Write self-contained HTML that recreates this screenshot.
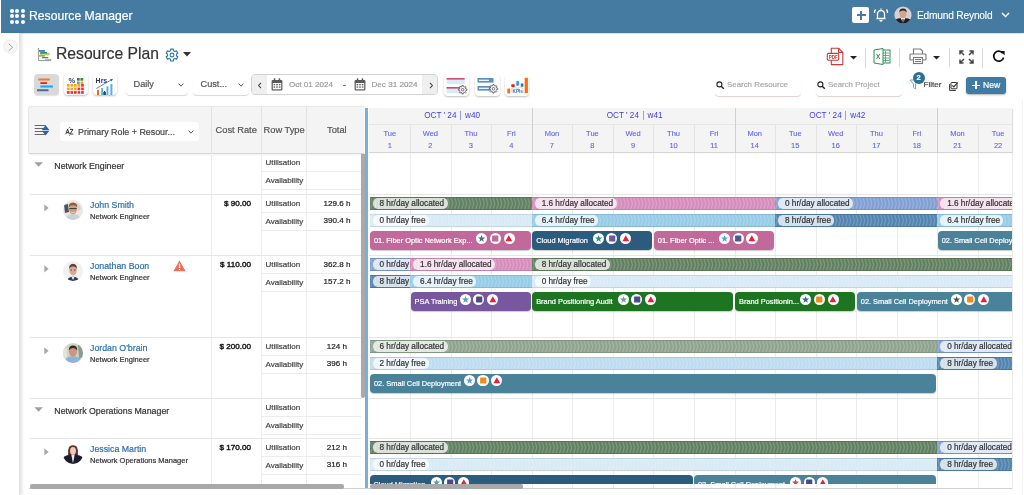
<!DOCTYPE html><html><head><meta charset="utf-8"><style>
*{box-sizing:border-box}
html,body{margin:0;padding:0}
body{width:1024px;height:495px;overflow:hidden;position:relative;background:#fff;will-change:transform;font-family:"Liberation Sans",sans-serif;color:#333}
.a{position:absolute}
.t{position:absolute;white-space:nowrap;line-height:1;-webkit-text-stroke:.2px currentColor}
.pill,.pt{-webkit-text-stroke:.2px currentColor}
.hdr{left:1px;top:0;width:1023px;height:33px;background:#457ba1;box-shadow:0 .5px 1px rgba(0,0,0,.12)}
.side{left:0;top:33px;width:20px;height:462px;background:#fff;border-right:1px solid #e2e2e2;box-shadow:2px 0 3px rgba(0,0,0,.12)}
.dd{background:#fff;border-radius:4px;box-shadow:0 1px 0.5px rgba(190,130,130,.32),0 1px 2px rgba(0,0,0,.04)}
.tb{background:#fff;border-radius:4px;box-shadow:0 1px 2px rgba(0,0,0,.25)}
.sep{width:1px;background:#d8d8d8}
.bar{position:absolute;height:13px;overflow:hidden;box-shadow:inset 0 1px 0 rgba(0,0,0,.09),inset 0 -1px 0 rgba(0,0,0,.09)}
.pill{position:absolute;left:3px;top:1px;height:11px;border-radius:5px;background:rgba(255,255,255,.74);font-size:8.2px;line-height:11px;padding:0 3.5px 0 7px;color:#333;white-space:nowrap}
.chev{background-image:repeating-linear-gradient(73deg,transparent 0,transparent .9px,rgba(255,255,255,.2) 1.4px,rgba(255,255,255,.2) 2.1px,transparent 2.6px,transparent 3.35px),repeating-linear-gradient(107deg,transparent 0,transparent .9px,rgba(255,255,255,.2) 1.4px,rgba(255,255,255,.2) 2.1px,transparent 2.6px,transparent 3.35px);background-size:100% 50%,100% 50%;background-position:0 0,0 100%;background-repeat:no-repeat}
.chevd{background-image:repeating-linear-gradient(-60deg,transparent 0 2.2px,rgba(0,0,0,.09) 2.2px 3.4px),repeating-linear-gradient(60deg,transparent 0 2.2px,rgba(0,0,0,.09) 2.2px 3.4px);background-size:100% 50%,100% 50%;background-position:0 0,0 100%;background-repeat:no-repeat}
.proj{position:absolute;height:19px;border-radius:4px;overflow:hidden;color:#fff;box-shadow:0 1px 1px rgba(0,0,0,.2)}
.proj .pt{position:absolute;left:4px;top:6px;font-size:7.4px;line-height:8px;white-space:nowrap}
.ic{position:absolute;top:2px;width:11.2px;height:11.2px;border-radius:50%;background:#fff}
.vl{position:absolute;width:1px;background:#ececec}
.hl{position:absolute;height:1px;background:#e6e6e6}
.wk{color:#3c3cf0;font-size:8.2px;-webkit-text-stroke:0}
.dy{color:#6262f0;font-size:7.5px;text-align:center;-webkit-text-stroke:.1px #6262f0}
</style></head><body><svg class="a" width="0" height="0" style="left:0;top:0"><defs><pattern id="chev" x="0" y="0" width="3.5" height="13" patternUnits="userSpaceOnUse"><path d="M0.6 1 L2.4 6.5 L0.6 12" fill="none" stroke="#fff" stroke-opacity=".22" stroke-width="1.2"/></pattern></defs></svg><div class="a hdr"></div><div class="a" style="left:9.8px;top:8.6px;width:4.2px;height:4.2px;border-radius:50%;background:#fff"></div><div class="a" style="left:15.3px;top:8.6px;width:4.2px;height:4.2px;border-radius:50%;background:#fff"></div><div class="a" style="left:20.8px;top:8.6px;width:4.2px;height:4.2px;border-radius:50%;background:#fff"></div><div class="a" style="left:9.8px;top:14.1px;width:4.2px;height:4.2px;border-radius:50%;background:#fff"></div><div class="a" style="left:15.3px;top:14.1px;width:4.2px;height:4.2px;border-radius:50%;background:#fff"></div><div class="a" style="left:20.8px;top:14.1px;width:4.2px;height:4.2px;border-radius:50%;background:#fff"></div><div class="a" style="left:9.8px;top:19.6px;width:4.2px;height:4.2px;border-radius:50%;background:#fff"></div><div class="a" style="left:15.3px;top:19.6px;width:4.2px;height:4.2px;border-radius:50%;background:#fff"></div><div class="a" style="left:20.8px;top:19.6px;width:4.2px;height:4.2px;border-radius:50%;background:#fff"></div><div class="t" style="left:29px;top:10px;font-size:12.2px;color:#fff">Resource Manager</div><div class="a" style="left:852px;top:7px;width:17px;height:16px;background:#fff;border-radius:2px"></div><div class="a" style="left:856.5px;top:14.4px;width:9.5px;height:1.8px;background:#457ba1"></div><div class="a" style="left:860.4px;top:10.6px;width:1.8px;height:9.4px;background:#457ba1"></div><svg class="a" style="left:873px;top:6px" width="16" height="17" viewBox="0 0 16 17"><g fill="none" stroke="#fff" stroke-width="1.3"><path d="M4.5 12.5 V8 a3.5 3.5 0 0 1 7 0 V12.5 Z M3.5 12.5 H12.5"/><path d="M7 14 a1 1 0 0 0 2 0"/><path d="M2.5 3.5 Q1.2 5 1.5 7 M13.5 3.5 Q14.8 5 14.5 7"/><path d="M8 2.5 V3.8"/></g></svg><svg class="a" style="left:894.3px;top:6px" width="18" height="18" viewBox="0 0 18 18"><defs><clipPath id="cav"><circle cx="9" cy="9" r="8.6"/></clipPath></defs><g clip-path="url(#cav)"><rect width="18" height="18" fill="#d6d2d0"/><path d="M0 18 L1 14 Q3 12 9 12 Q15 12 17 14 L18 18Z" fill="#1e1e22"/><path d="M6.8 12 L9 17.5 L11.2 12Z" fill="#f2f2f2"/><path d="M8.5 13 H9.5 L9.8 17 H8.2Z" fill="#222"/><ellipse cx="9" cy="7.8" rx="3.6" ry="4.4" fill="#d4a58e"/><path d="M5.3 6.6 Q5.2 2.6 9 2.5 Q12.8 2.6 12.7 6.6 Q11.6 4.4 9 4.5 Q6.4 4.4 5.3 6.6Z" fill="#2e2622"/></g></svg><div class="t" style="left:917px;top:11.2px;font-size:10.2px;letter-spacing:-.2px;color:#fff;-webkit-text-stroke:.1px #fff">Edmund Reynold</div><svg class="a" style="left:1001px;top:12px" width="9" height="6" viewBox="0 0 9 6"><path d="M1 1 L4.5 4.5 L8 1" fill="none" stroke="#fff" stroke-width="1.5"/></svg><div class="a side"></div><div class="a" style="left:3.5px;top:40px;width:13.3px;height:13.3px;border-radius:50%;background:#f6f6f6;box-shadow:0 0 1.5px rgba(0,0,0,.22)"></div><svg class="a" style="left:7px;top:42.5px" width="8" height="9" viewBox="0 0 8 9"><path d="M1.8 .8 L5.6 4.3 L1.8 7.8" fill="none" stroke="#8a96aa" stroke-width=".9"/></svg><svg class="a" style="left:37px;top:47px" width="16" height="15" viewBox="0 0 16 15"><path d="M1.6 1 V13.6 H14" fill="none" stroke="#8a8a8a" stroke-width=".9"/><rect x="2" y="3.2" width="5.9" height="1.5" fill="#2a6090"/><rect x="3.2" y="5" width="6.8" height="1.4" fill="#3a80b8"/><rect x="3" y="6.5" width="9.5" height=".6" fill="#555"/><rect x="3" y="7.1" width="9.7" height="1.2" fill="#b8e040"/><rect x="2" y="8.3" width="5.9" height="1.2" fill="#8a8a30"/><rect x="5" y="10" width="6.2" height="1.3" fill="#3a80b8"/><rect x="8" y="12.3" width="3" height="1" fill="#6ab0e0"/><rect x="11" y="12.2" width="1.2" height="1.1" fill="#f08030"/><rect x="12.5" y="12" width="2" height="1" fill="#7ad07a"/></svg><div class="t" style="left:56px;top:46.3px;font-size:15.7px;color:#333">Resource Plan</div><svg class="a" style="left:164.6px;top:47.6px" width="14" height="14" viewBox="0 0 14 14"><path d="M5.53 2.64 L5.67 1.05 L8.33 1.05 L8.47 2.64 L10.04 3.55 L11.49 2.87 L12.82 5.18 L11.51 6.09 L11.51 7.91 L12.82 8.82 L11.49 11.13 L10.04 10.45 L8.47 11.36 L8.33 12.95 L5.67 12.95 L5.53 11.36 L3.96 10.45 L2.51 11.13 L1.18 8.82 L2.49 7.91 L2.49 6.09 L1.18 5.18 L2.51 2.87 L3.96 3.55Z" fill="none" stroke="#2f78aa" stroke-width="1.15" stroke-linejoin="round"/><circle cx="7" cy="7" r="1.9" fill="none" stroke="#2f78aa" stroke-width="1.1"/></svg><svg class="a" style="left:182.5px;top:52px" width="8" height="5" viewBox="0 0 8 5"><path d="M0 0 H8 L4 4.5Z" fill="#333"/></svg><div class="a" style="left:34px;top:74px;width:25px;height:21px;border-radius:4px;background:#d9d9d9;box-shadow:0 1px 1px rgba(0,0,0,.12)"></div><svg class="a" style="left:37px;top:76px" width="19" height="17" viewBox="0 0 19 17"><rect x="1.3" y="2.5" width="11.5" height="1.9" rx=".3" fill="#f47b20"/><rect x="3.4" y="6.3" width="6.7" height="1.8" rx=".3" fill="#f01818"/><rect x="3.4" y="9.6" width="12.6" height="2" rx=".3" fill="#19a6f0"/><rect x="0" y="13.3" width="11.5" height="1.9" rx=".3" fill="#3f6f9a"/></svg><div class="a tb" style="left:64px;top:74px;width:24px;height:21px"></div><svg class="a" style="left:66px;top:76px" width="20" height="19" viewBox="0 0 20 19"><text x="2.6" y="7.4" font-family="Liberation Sans" font-size="7.5" font-weight="bold" fill="#2c3a6a">%</text><rect x="11" y="2" width="2.7" height="2.7" fill="#2e8b3a"/><rect x="14.5" y="2" width="2.7" height="2.7" fill="#2e8b3a"/><rect x="11" y="5.5" width="2.7" height="2.7" fill="#4aa0e0"/><rect x="14.5" y="5.5" width="2.7" height="2.7" fill="#f5a623"/><rect x="0.90" y="8.00" width="2.7" height="2.7" fill="#f5a623"/><rect x="4.45" y="8.00" width="2.7" height="2.7" fill="#f5a623"/><rect x="8.00" y="8.00" width="2.7" height="2.7" fill="#f5a623"/><rect x="11.55" y="8.00" width="2.7" height="2.7" fill="#f5a623"/><rect x="15.10" y="8.00" width="2.7" height="2.7" fill="#e8343a"/><rect x="0.90" y="11.55" width="2.7" height="2.7" fill="#f5a623"/><rect x="4.45" y="11.55" width="2.7" height="2.7" fill="#f5a623"/><rect x="8.00" y="11.55" width="2.7" height="2.7" fill="#f5a623"/><rect x="11.55" y="11.55" width="2.7" height="2.7" fill="#e8343a"/><rect x="15.10" y="11.55" width="2.7" height="2.7" fill="#e8343a"/><rect x="0.90" y="15.10" width="2.7" height="2.7" fill="#e8343a"/><rect x="4.45" y="15.10" width="2.7" height="2.7" fill="#e8343a"/><rect x="8.00" y="15.10" width="2.7" height="2.7" fill="#e8343a"/><rect x="11.55" y="15.10" width="2.7" height="2.7" fill="#e8343a"/><rect x="15.10" y="15.10" width="2.7" height="2.7" fill="#e8343a"/></svg><div class="a tb" style="left:93px;top:74px;width:24px;height:21px"></div><svg class="a" style="left:95px;top:75px" width="20" height="21" viewBox="0 0 20 21"><text x=".6" y="7.6" font-family="Liberation Sans" font-size="7" font-weight="bold" fill="#2c3a6a">Hrs</text><rect x="2" y="14.8" width="2" height="5.2" fill="#f06a20"/><rect x="6.2" y="13" width="1.9" height="7" fill="#5ab0dc"/><rect x="11.5" y="11.3" width="1.9" height="8.7" fill="#5ab0dc"/><rect x="15.4" y="9" width="2" height="11" fill="#5ab0dc"/><path d="M8.3 17 h2.6 v3 h-2.6z M9 16 h1.2 v1 h-1.2z" fill="#2c4a6a"/><path d="M1.3 13.5 L17.2 4.4" stroke="#2a6a9a" stroke-width=".8"/><path d="M15 3.9 L17.9 4 L16.6 6.5Z" fill="#2a6a9a"/></svg><div class="a dd" style="left:125.5px;top:74px;width:62px;height:20.5px"></div><div class="t" style="left:133.5px;top:79.5px;font-size:9.2px;color:#555">Daily</div><svg class="a" style="left:177.5px;top:82.5px" width="6" height="4" viewBox="0 0 6 4"><path d="M.6 .6 L3 3.2 L5.4 .6" fill="none" stroke="#555" stroke-width="1"/></svg><div class="a dd" style="left:193px;top:74px;width:55.5px;height:20.5px"></div><div class="t" style="left:200.5px;top:79.5px;font-size:9.2px;color:#555">Cust...</div><svg class="a" style="left:238px;top:82.5px" width="6" height="4" viewBox="0 0 6 4"><path d="M.6 .6 L3 3.2 L5.4 .6" fill="none" stroke="#555" stroke-width="1"/></svg><div class="a" style="left:251px;top:74.3px;width:187px;height:21px;border:1px solid #d2d2d2;border-radius:4px;background:#fff;overflow:hidden"><div class="a" style="left:0;top:0;width:15px;height:19px;background:#efefef"></div><div class="a" style="right:0;top:0;width:15px;height:19px;background:#efefef"></div></div><svg class="a" style="left:256.5px;top:81.5px" width="6" height="7" viewBox="0 0 6 7"><path d="M4 .8 L1.6 3.5 L4 6.2" fill="none" stroke="#444" stroke-width="1.1"/></svg><svg class="a" style="left:427.5px;top:81.5px" width="6" height="7" viewBox="0 0 6 7"><path d="M2 .8 L4.4 3.5 L2 6.2" fill="none" stroke="#444" stroke-width="1.1"/></svg><svg class="a" style="left:271px;top:77.5px" width="12" height="13" viewBox="0 0 12 13"><rect x="0.6" y="2" width="10.8" height="10.4" rx="1" fill="#5a5a5a"/><rect x="1.8" y="5" width="8.4" height="6.3" fill="#fff"/><rect x="2.8" y="0.3" width="1.5" height="3" fill="#5a5a5a"/><rect x="7.7" y="0.3" width="1.5" height="3" fill="#5a5a5a"/><g fill="#5a5a5a"><rect x="2.6" y="6" width="1.6" height="1.3"/><rect x="5.2" y="6" width="1.6" height="1.3"/><rect x="7.8" y="6" width="1.6" height="1.3"/><rect x="2.6" y="8.4" width="1.6" height="1.3"/><rect x="5.2" y="8.4" width="1.6" height="1.3"/><rect x="7.8" y="8.4" width="1.6" height="1.3"/></g></svg><svg class="a" style="left:353.5px;top:77.5px" width="12" height="13" viewBox="0 0 12 13"><rect x="0.6" y="2" width="10.8" height="10.4" rx="1" fill="#5a5a5a"/><rect x="1.8" y="5" width="8.4" height="6.3" fill="#fff"/><rect x="2.8" y="0.3" width="1.5" height="3" fill="#5a5a5a"/><rect x="7.7" y="0.3" width="1.5" height="3" fill="#5a5a5a"/><g fill="#5a5a5a"><rect x="2.6" y="6" width="1.6" height="1.3"/><rect x="5.2" y="6" width="1.6" height="1.3"/><rect x="7.8" y="6" width="1.6" height="1.3"/><rect x="2.6" y="8.4" width="1.6" height="1.3"/><rect x="5.2" y="8.4" width="1.6" height="1.3"/><rect x="7.8" y="8.4" width="1.6" height="1.3"/></g></svg><div class="t" style="left:289px;top:81px;font-size:8.1px;color:#9a9a9a">Oct 01 2024</div><div class="a" style="left:342.5px;top:85px;width:3.5px;height:1px;background:#777"></div><div class="t" style="left:371.5px;top:81px;font-size:8.1px;color:#9a9a9a">Dec 31 2024</div><div class="a tb" style="left:444px;top:75px;width:25px;height:21px"></div><svg class="a" style="left:444px;top:75px" width="25" height="21" viewBox="0 0 25 21"><rect x="2.6" y="3" width="18" height="6" fill="#d6eaf8"/><rect x="2.6" y="3" width="18" height="1.6" fill="#d04a6e"/><rect x="2.6" y="12" width="18" height="6" fill="#d6eaf8"/><rect x="2.6" y="12" width="18" height="1.6" fill="#d04a6e"/><path d="M21.83 14.01 L22.96 14.11 L22.96 15.29 L21.83 15.39 L21.40 16.43 L22.13 17.30 L21.30 18.13 L20.43 17.40 L19.39 17.83 L19.29 18.96 L18.11 18.96 L18.01 17.83 L16.97 17.40 L16.10 18.13 L15.27 17.30 L16.00 16.43 L15.57 15.39 L14.44 15.29 L14.44 14.11 L15.57 14.01 L16.00 12.97 L15.27 12.10 L16.10 11.27 L16.97 12.00 L18.01 11.57 L18.11 10.44 L19.29 10.44 L19.39 11.57 L20.43 12.00 L21.30 11.27 L22.13 12.10 L21.40 12.97Z" fill="#fff" stroke="#5a5a5a" stroke-width=".9" stroke-linejoin="round"/><circle cx="18.7" cy="14.7" r="1.3" fill="none" stroke="#5a5a5a" stroke-width=".8"/></svg><div class="a tb" style="left:474.5px;top:75px;width:25px;height:21px"></div><svg class="a" style="left:474.5px;top:75px" width="25" height="21" viewBox="0 0 25 21"><rect x="2.5" y="3" width="16" height="4.6" fill="#5b8fc0"/><rect x="4" y="4.7" width="10" height="1.2" fill="#fff"/><rect x="2.5" y="11" width="16" height="4.6" fill="#5b8fc0"/><rect x="4" y="12.7" width="10" height="1.2" fill="#fff"/><path d="M21.63 13.11 L22.76 13.21 L22.76 14.39 L21.63 14.49 L21.20 15.53 L21.93 16.40 L21.10 17.23 L20.23 16.50 L19.19 16.93 L19.09 18.06 L17.91 18.06 L17.81 16.93 L16.77 16.50 L15.90 17.23 L15.07 16.40 L15.80 15.53 L15.37 14.49 L14.24 14.39 L14.24 13.21 L15.37 13.11 L15.80 12.07 L15.07 11.20 L15.90 10.37 L16.77 11.10 L17.81 10.67 L17.91 9.54 L19.09 9.54 L19.19 10.67 L20.23 11.10 L21.10 10.37 L21.93 11.20 L21.20 12.07Z" fill="#fff" stroke="#5a5a5a" stroke-width=".9" stroke-linejoin="round"/><circle cx="18.5" cy="13.8" r="1.3" fill="none" stroke="#5a5a5a" stroke-width=".8"/></svg><div class="a tb" style="left:504.5px;top:75px;width:24.5px;height:21px"></div><svg class="a" style="left:504.5px;top:75px" width="25" height="21" viewBox="0 0 25 21"><rect x="2.3" y="13.6" width="2.7" height="4.8" fill="#ff6a10"/><rect x="6.3" y="9.2" width="3.4" height="2.8" rx=".5" fill="#f01818"/><rect x="11.3" y="6" width="2.6" height="4.8" rx=".5" fill="#1aa0f0"/><rect x="15.8" y="8.4" width="2.6" height="3.4" rx=".3" fill="#3f6f9a"/><rect x="19.7" y="2.8" width="3.2" height="15.3" fill="#ff6a10"/><path d="M6 17.8 L6.5 13.5 L9 12.5 L12.5 13.3 L15.5 12.4 L18 13.5 L18.2 17.8" fill="none" stroke="#8aaac8" stroke-width=".7" stroke-dasharray="1 .6"/><text x="7.6" y="17.6" font-family="Liberation Sans" font-size="4.6" font-weight="bold" fill="#3f6f9a">KPIs</text></svg><svg class="a" style="left:826px;top:47px" width="19" height="19" viewBox="0 0 19 19"><path d="M5.3 1.2 H12.6 L16.8 5.4 V17.6 H5.3 Z M12.6 1.2 V5.4 H16.8" fill="none" stroke="#cc3b36" stroke-width="1.1" stroke-linejoin="round"/><rect x="1.3" y="6.4" width="11.4" height="6.9" rx="1.2" fill="#fff" stroke="#cc3b36" stroke-width="1.1"/><text x="2.7" y="11.6" font-family="Liberation Sans" font-size="4.6" font-weight="bold" fill="#cc3b36">PDF</text></svg><svg class="a" style="left:850px;top:56px" width="7" height="4" viewBox="0 0 7 4"><path d="M0 0 H7 L3.5 3.5Z" fill="#222"/></svg><div class="a sep" style="left:865px;top:48px;height:19.5px"></div><svg class="a" style="left:873px;top:47.5px" width="18" height="17" viewBox="0 0 18 17"><rect x="7" y="2" width="10" height="13" fill="#fff" stroke="#2e8b57" stroke-width="1"/><g stroke="#2e8b57" stroke-width=".7"><path d="M9 5 H16 M9 7.5 H16 M9 10 H16 M9 12.5 H16 M12.5 3 V14.5"/></g><path d="M1 2 L10 0.5 V16.5 L1 15 Z" fill="#fff" stroke="#2e8b57" stroke-width="1"/><text x="3" y="11" font-family="Liberation Sans" font-size="6.5" font-weight="bold" fill="#2e8b57">X</text></svg><div class="a sep" style="left:898.5px;top:48px;height:19px"></div><svg class="a" style="left:909px;top:47.5px" width="18" height="17" viewBox="0 0 18 17"><g fill="none" stroke="#7a7a7a" stroke-width="1.15"><path d="M4.5 6 V1 H11.5 L13.5 3 V6"/><path d="M4 12 H2 Q1 12 1 11 V7 Q1 6 2 6 H16 Q17 6 17 7 V11 Q17 12 16 12 H14"/><rect x="4.5" y="9.5" width="9" height="6"/><path d="M6 11.5 H12 M6 13.5 H12"/></g></svg><svg class="a" style="left:933px;top:56px" width="7" height="4" viewBox="0 0 7 4"><path d="M0 0 H7 L3.5 3.5Z" fill="#222"/></svg><div class="a sep" style="left:949px;top:48px;height:19px"></div><svg class="a" style="left:959px;top:50px" width="15" height="14" viewBox="0 0 15 14"><g fill="none" stroke="#444" stroke-width="1.5"><path d="M1 4.5 V1 H4.5 M1 1 L5 5"/><path d="M14 4.5 V1 H10.5 M14 1 L10 5"/><path d="M1 9.5 V13 H4.5 M1 13 L5 9"/><path d="M14 9.5 V13 H10.5 M14 13 L10 9"/></g></svg><div class="a sep" style="left:982px;top:48px;height:19.5px"></div><svg class="a" style="left:991.5px;top:50px" width="14" height="13" viewBox="0 0 14 13"><path d="M10.8 3.2 A5 5 0 1 0 11.6 7.5" fill="none" stroke="#111" stroke-width="1.7"/><path d="M8.2 1 H12.6 V5.3Z" fill="#111"/></svg><div class="a dd" style="left:714.5px;top:75px;width:86.5px;height:21px"></div><svg class="a" style="left:715.5px;top:81px" width="9" height="9" viewBox="0 0 9 9"><circle cx="3.4" cy="3.4" r="2.5" fill="none" stroke="#222" stroke-width="1.1"/><path d="M5.2 5.2 L7.8 7.8" stroke="#222" stroke-width="1.4"/></svg><div class="t" style="left:727.0px;top:80.8px;font-size:7.9px;color:#a9a9a9">Search Resource</div><div class="a dd" style="left:815.5px;top:75px;width:86px;height:21px"></div><svg class="a" style="left:816.5px;top:81px" width="9" height="9" viewBox="0 0 9 9"><circle cx="3.4" cy="3.4" r="2.5" fill="none" stroke="#222" stroke-width="1.1"/><path d="M5.2 5.2 L7.8 7.8" stroke="#222" stroke-width="1.4"/></svg><div class="t" style="left:828.0px;top:80.8px;font-size:7.9px;color:#a9a9a9">Search Project</div><svg class="a" style="left:909px;top:78.5px" width="11" height="11" viewBox="0 0 11 11"><path d="M1 1 H10 L6.5 5 V10 L4.5 8.5 V5 Z" fill="none" stroke="#5bbcbc" stroke-width="1"/></svg><div class="a" style="left:912.8px;top:71.5px;width:12px;height:12px;border-radius:50%;background:#2f6f94"></div><div class="t" style="left:916.6px;top:74px;font-size:7.5px;color:#fff;font-weight:bold">2</div><div class="t" style="left:923.5px;top:81px;font-size:8.1px;color:#444">Filter</div><svg class="a" style="left:947.5px;top:80.5px" width="11" height="11" viewBox="0 0 11 11"><path d="M1.6 3.2 V9.4 H7.8" fill="none" stroke="#333" stroke-width="1"/><rect x="3" y="1.5" width="6" height="6.3" rx=".8" fill="#fff" stroke="#333" stroke-width="1"/><path d="M4.3 4.4 L5.8 5.9 L9.6 1.6" fill="none" stroke="#333" stroke-width="1.2"/></svg><div class="a" style="left:966px;top:77px;width:39.5px;height:17px;border-radius:3px;background:#3f7ba3;box-shadow:0 1px 2px rgba(0,0,0,.3)"></div><div class="a" style="left:971.6px;top:84.6px;width:8.4px;height:1.5px;background:#fff"></div><div class="a" style="left:975.1px;top:81.1px;width:1.5px;height:8.4px;background:#fff"></div><div class="t" style="left:983px;top:81px;font-size:8.6px;color:#fff">New</div><div class="a" style="left:29px;top:107px;width:984px;height:382px"></div><div class="a" style="left:29px;top:107px;width:335px;height:46px;background:#f4f4f4;border-radius:3px 0 0 0;box-shadow:0 1px 0 #d6d6d6,0 2px 2px rgba(0,0,0,.06),-.5px -.5px 1px rgba(0,0,0,.1)"></div><div class="a" style="left:211px;top:107px;width:1px;height:46px;background:#e2e2e2"></div><div class="a" style="left:261px;top:107px;width:1px;height:46px;background:#e2e2e2"></div><div class="a" style="left:306px;top:107px;width:1px;height:46px;background:#e2e2e2"></div><svg class="a" style="left:34px;top:124px" width="16" height="13" viewBox="0 0 16 13"><g fill="#666"><rect x=".7" y="1" width="11" height="1"/><rect x=".7" y="4" width="9" height="1"/><rect x=".7" y="7" width="9" height="1"/><rect x=".7" y="10" width="11" height="1"/></g><path d="M7.8 5.9 L11.6 1.2 L15.4 5.9Z" fill="#2a65a8"/><path d="M7.8 6.8 L11.6 11.5 L15.4 6.8Z" fill="#2a65a8"/></svg><div class="a" style="left:59.5px;top:122px;width:139px;height:19px;border-radius:3px;background:#fff"></div><svg class="a" style="left:65px;top:125.5px" width="10" height="10" viewBox="0 0 10 10"><path d="M.8 8.2 L2.6 3.2 L4.4 8.2 M1.5 6.6 H3.7" fill="none" stroke="#333" stroke-width="1"/><path d="M4.9 3.4 H8 L5 8 H8.3" fill="none" stroke="#333" stroke-width="1"/><path d="M3.6 2.4 L4.6 1.2 L5.6 2.4" fill="none" stroke="#555" stroke-width=".7"/><circle cx="4.6" cy="9.3" r=".5" fill="#555"/></svg><div class="t" style="left:78px;top:127.5px;font-size:8.9px;color:#444">Primary Role + Resour...</div><svg class="a" style="left:188px;top:129.5px" width="6" height="4" viewBox="0 0 6 4"><path d="M.6 .6 L3 3.2 L5.4 .6" fill="none" stroke="#555" stroke-width="1"/></svg><div class="t" style="left:215.5px;top:126px;font-size:9.3px;color:#555">Cost Rate</div><div class="t" style="left:263.5px;top:126px;font-size:9.3px;color:#555">Row Type</div><div class="t" style="left:327px;top:126px;font-size:9.3px;color:#555">Total</div><div class="a" style="left:361px;top:153.5px;width:3.6px;height:244px;background:#a9a9a9;border-radius:0 0 2px 2px"></div><div class="a" style="left:364.8px;top:107.5px;width:3px;height:381.5px;background:#79b0da"></div><div class="a" style="left:369.3px;top:108px;width:642.7px;height:44px;background:#f4f4f4;box-shadow:0 1px 0 #d6d6d6,1px 1px 1px rgba(0,0,0,.12)"></div><div class="a" style="left:369.3px;top:124.3px;width:642.7px;height:1px;background:#e6e6e6"></div><div class="t dy" style="left:369.5px;top:129.5px;width:40.5px">Tue</div><div class="t dy" style="left:369.5px;top:141.5px;width:40.5px">1</div><div class="a" style="left:410.1px;top:124.3px;width:1px;height:28px;background:#e4e4e4"></div><div class="t dy" style="left:410.1px;top:129.5px;width:40.5px">Wed</div><div class="t dy" style="left:410.1px;top:141.5px;width:40.5px">2</div><div class="a" style="left:450.6px;top:124.3px;width:1px;height:28px;background:#e4e4e4"></div><div class="t dy" style="left:450.6px;top:129.5px;width:40.5px">Thu</div><div class="t dy" style="left:450.6px;top:141.5px;width:40.5px">3</div><div class="a" style="left:491.1px;top:124.3px;width:1px;height:28px;background:#e4e4e4"></div><div class="t dy" style="left:491.1px;top:129.5px;width:40.5px">Fri</div><div class="t dy" style="left:491.1px;top:141.5px;width:40.5px">4</div><div class="a" style="left:531.7px;top:108px;width:1px;height:44.5px;background:#cfcfcf"></div><div class="t dy" style="left:531.7px;top:129.5px;width:40.5px">Mon</div><div class="t dy" style="left:531.7px;top:141.5px;width:40.5px">7</div><div class="a" style="left:572.2px;top:124.3px;width:1px;height:28px;background:#e4e4e4"></div><div class="t dy" style="left:572.2px;top:129.5px;width:40.5px">Tue</div><div class="t dy" style="left:572.2px;top:141.5px;width:40.5px">8</div><div class="a" style="left:612.8px;top:124.3px;width:1px;height:28px;background:#e4e4e4"></div><div class="t dy" style="left:612.8px;top:129.5px;width:40.5px">Wed</div><div class="t dy" style="left:612.8px;top:141.5px;width:40.5px">9</div><div class="a" style="left:653.3px;top:124.3px;width:1px;height:28px;background:#e4e4e4"></div><div class="t dy" style="left:653.3px;top:129.5px;width:40.5px">Thu</div><div class="t dy" style="left:653.3px;top:141.5px;width:40.5px">10</div><div class="a" style="left:693.9px;top:124.3px;width:1px;height:28px;background:#e4e4e4"></div><div class="t dy" style="left:693.9px;top:129.5px;width:40.5px">Fri</div><div class="t dy" style="left:693.9px;top:141.5px;width:40.5px">11</div><div class="a" style="left:734.5px;top:108px;width:1px;height:44.5px;background:#cfcfcf"></div><div class="t dy" style="left:734.5px;top:129.5px;width:40.5px">Mon</div><div class="t dy" style="left:734.5px;top:141.5px;width:40.5px">14</div><div class="a" style="left:775.0px;top:124.3px;width:1px;height:28px;background:#e4e4e4"></div><div class="t dy" style="left:775.0px;top:129.5px;width:40.5px">Tue</div><div class="t dy" style="left:775.0px;top:141.5px;width:40.5px">15</div><div class="a" style="left:815.5px;top:124.3px;width:1px;height:28px;background:#e4e4e4"></div><div class="t dy" style="left:815.5px;top:129.5px;width:40.5px">Wed</div><div class="t dy" style="left:815.5px;top:141.5px;width:40.5px">16</div><div class="a" style="left:856.1px;top:124.3px;width:1px;height:28px;background:#e4e4e4"></div><div class="t dy" style="left:856.1px;top:129.5px;width:40.5px">Thu</div><div class="t dy" style="left:856.1px;top:141.5px;width:40.5px">17</div><div class="a" style="left:896.6px;top:124.3px;width:1px;height:28px;background:#e4e4e4"></div><div class="t dy" style="left:896.6px;top:129.5px;width:40.5px">Fri</div><div class="t dy" style="left:896.6px;top:141.5px;width:40.5px">18</div><div class="a" style="left:937.2px;top:108px;width:1px;height:44.5px;background:#cfcfcf"></div><div class="t dy" style="left:937.2px;top:129.5px;width:40.5px">Mon</div><div class="t dy" style="left:937.2px;top:141.5px;width:40.5px">21</div><div class="a" style="left:977.8px;top:124.3px;width:1px;height:28px;background:#e4e4e4"></div><div class="t dy" style="left:977.8px;top:129.5px;width:40.5px">Tue</div><div class="t dy" style="left:977.8px;top:141.5px;width:40.5px">22</div><div class="t wk" style="left:422.1px;top:110.5px;width:60px;text-align:center">OCT &#39; 24 <span style="display:inline-block;width:1px;height:9px;background:#a0a0d8;vertical-align:-2px;margin:0 1.5px"></span> w40</div><div class="t wk" style="left:604.6px;top:110.5px;width:60px;text-align:center">OCT &#39; 24 <span style="display:inline-block;width:1px;height:9px;background:#a0a0d8;vertical-align:-2px;margin:0 1.5px"></span> w41</div><div class="t wk" style="left:807.3px;top:110.5px;width:60px;text-align:center">OCT &#39; 24 <span style="display:inline-block;width:1px;height:9px;background:#a0a0d8;vertical-align:-2px;margin:0 1.5px"></span> w42</div><div class="vl" style="left:410.1px;top:153px;height:335px"></div><div class="vl" style="left:450.6px;top:153px;height:335px"></div><div class="vl" style="left:491.1px;top:153px;height:335px"></div><div class="vl" style="left:531.7px;top:153px;height:335px"></div><div class="vl" style="left:572.2px;top:153px;height:335px"></div><div class="vl" style="left:612.8px;top:153px;height:335px"></div><div class="vl" style="left:653.3px;top:153px;height:335px"></div><div class="vl" style="left:693.9px;top:153px;height:335px"></div><div class="vl" style="left:734.5px;top:153px;height:335px"></div><div class="vl" style="left:775.0px;top:153px;height:335px"></div><div class="vl" style="left:815.5px;top:153px;height:335px"></div><div class="vl" style="left:856.1px;top:153px;height:335px"></div><div class="vl" style="left:896.6px;top:153px;height:335px"></div><div class="vl" style="left:937.2px;top:153px;height:335px"></div><div class="vl" style="left:977.8px;top:153px;height:335px"></div><div class="hl" style="left:30px;top:194px;width:331px"></div><div class="hl" style="left:369px;top:194px;width:643px"></div><div class="hl" style="left:261px;top:171px;width:100px;background:#ececec"></div><div class="hl" style="left:261px;top:189px;width:100px;background:#ececec"></div><div class="t" style="left:265.5px;top:158.5px;font-size:8px;color:#444">Utilisation</div><div class="t" style="left:265.5px;top:176.5px;font-size:8px;color:#444">Availability</div><div class="hl" style="left:30px;top:255px;width:331px"></div><div class="hl" style="left:369px;top:255px;width:643px"></div><div class="hl" style="left:261px;top:212px;width:100px;background:#ececec"></div><div class="hl" style="left:261px;top:230px;width:100px;background:#ececec"></div><div class="t" style="left:265.5px;top:199.5px;font-size:8px;color:#444">Utilisation</div><div class="t" style="left:265.5px;top:217.5px;font-size:8px;color:#444">Availability</div><div class="hl" style="left:30px;top:337px;width:331px"></div><div class="hl" style="left:369px;top:337px;width:643px"></div><div class="hl" style="left:261px;top:273px;width:100px;background:#ececec"></div><div class="hl" style="left:261px;top:291px;width:100px;background:#ececec"></div><div class="t" style="left:265.5px;top:260.5px;font-size:8px;color:#444">Utilisation</div><div class="t" style="left:265.5px;top:278.5px;font-size:8px;color:#444">Availability</div><div class="hl" style="left:30px;top:398px;width:331px"></div><div class="hl" style="left:369px;top:398px;width:643px"></div><div class="hl" style="left:261px;top:355px;width:100px;background:#ececec"></div><div class="hl" style="left:261px;top:373px;width:100px;background:#ececec"></div><div class="t" style="left:265.5px;top:342.5px;font-size:8px;color:#444">Utilisation</div><div class="t" style="left:265.5px;top:360.5px;font-size:8px;color:#444">Availability</div><div class="hl" style="left:30px;top:438px;width:331px"></div><div class="hl" style="left:369px;top:438px;width:643px"></div><div class="hl" style="left:261px;top:416px;width:100px;background:#ececec"></div><div class="hl" style="left:261px;top:434px;width:100px;background:#ececec"></div><div class="t" style="left:265.5px;top:403.5px;font-size:8px;color:#444">Utilisation</div><div class="t" style="left:265.5px;top:421.5px;font-size:8px;color:#444">Availability</div><div class="hl" style="left:261px;top:456px;width:100px;background:#ececec"></div><div class="hl" style="left:261px;top:474px;width:100px;background:#ececec"></div><div class="t" style="left:265.5px;top:443.5px;font-size:8px;color:#444">Utilisation</div><div class="t" style="left:265.5px;top:461.5px;font-size:8px;color:#444">Availability</div><div class="a" style="left:211px;top:153px;width:1px;height:335px;background:#ececec"></div><div class="a" style="left:261px;top:153px;width:1px;height:335px;background:#ececec"></div><div class="a" style="left:306px;top:153px;width:1px;height:335px;background:#ececec"></div><svg class="a" style="left:34px;top:161.8px" width="10" height="6" viewBox="0 0 10 6"><path d="M.4 .2 H8.8 L4.6 4.7Z" fill="#a0a0a0"/></svg><div class="t" style="left:54.3px;top:161.6px;font-size:8.8px;color:#333">Network Engineer</div><svg class="a" style="left:34px;top:406.8px" width="10" height="6" viewBox="0 0 10 6"><path d="M.4 .2 H8.8 L4.6 4.7Z" fill="#a0a0a0"/></svg><div class="t" style="left:54.3px;top:406.6px;font-size:8.8px;color:#333">Network Operations Manager</div><svg class="a" style="left:43.5px;top:203.5px" width="5" height="8" viewBox="0 0 5 8"><path d="M0.3 0.3 V7.6 L4.6 3.95Z" fill="#a8a8a8"/></svg><svg class="a" style="left:63px;top:199.5px" width="20" height="20" viewBox="0 0 20 20"><defs><clipPath id="cjs"><circle cx="10" cy="10" r="10"/></clipPath></defs><g clip-path="url(#cjs)"><rect width="20" height="20" fill="#ebe7e3"/><path d="M1 5 L5 4 L6 12 L2 13Z" fill="#4e5660"/><path d="M13 3 Q17 4 18 9 L15 11Z" fill="#d9d2cc"/><path d="M2 20 Q3 14 10 14 Q17 14 18 20Z" fill="#c9d2da"/><ellipse cx="10" cy="9.5" rx="3.9" ry="4.8" fill="#cf9c7c"/><path d="M5.8 7.5 Q5.5 2.8 10 2.6 Q14.5 2.8 14.2 7.5 Q12.5 5 10 5.2 Q7.5 5 5.8 7.5Z" fill="#8e5a3a"/><path d="M6.3 8.6 H13.7" stroke="#2a2a2a" stroke-width=".9"/><path d="M8 12.2 Q10 13.2 12 12.2" stroke="#f4f0ee" stroke-width=".6" fill="none"/></g></svg><div class="t" style="left:90px;top:200.5px;font-size:8.8px;color:#2c70b0">John Smith</div><div class="t" style="left:90px;top:212.5px;font-size:7.5px;color:#333">Network Engineer</div><div class="t" style="left:215px;top:199.8px;width:36px;text-align:right;font-size:8.1px;color:#1a1a1a;-webkit-text-stroke:.45px #1a1a1a">$ 90.00</div><div class="t" style="left:312px;top:199.5px;width:50px;text-align:center;font-size:8.1px;color:#222">129.6 h</div><div class="t" style="left:312px;top:217px;width:50px;text-align:center;font-size:8.1px;color:#222">390.4 h</div><svg class="a" style="left:43.5px;top:264.5px" width="5" height="8" viewBox="0 0 5 8"><path d="M0.3 0.3 V7.6 L4.6 3.95Z" fill="#a8a8a8"/></svg><svg class="a" style="left:63px;top:260.5px" width="20" height="20" viewBox="0 0 20 20"><defs><clipPath id="cjb"><circle cx="10" cy="10" r="10"/></clipPath></defs><g clip-path="url(#cjb)"><rect width="20" height="20" fill="#f1f1f1"/><path d="M4 20 Q4.5 16 10 15.5 Q15.5 16 16 20Z" fill="#2c3e56"/><path d="M8.3 15.6 L10 19 L11.7 15.6Z" fill="#f4f4f4"/><ellipse cx="10" cy="9.6" rx="3.7" ry="4.9" fill="#d9aa94"/><path d="M6.2 8.6 Q5.6 3 10 2.8 Q14.4 3 13.8 8.6 Q13 5.4 10 5.5 Q7 5.4 6.2 8.6Z" fill="#5e4232"/><path d="M7.6 9 H9 M11 9 H12.4" stroke="#3a2a22" stroke-width=".8"/></g></svg><div class="t" style="left:90px;top:261.5px;font-size:8.8px;color:#2c70b0">Jonathan Boon</div><div class="t" style="left:90px;top:273.5px;font-size:7.5px;color:#333">Network Engineer</div><div class="t" style="left:215px;top:260.8px;width:36px;text-align:right;font-size:8.1px;color:#1a1a1a;-webkit-text-stroke:.45px #1a1a1a">$ 110.00</div><div class="t" style="left:312px;top:260.5px;width:50px;text-align:center;font-size:8.1px;color:#222">362.8 h</div><div class="t" style="left:312px;top:278px;width:50px;text-align:center;font-size:8.1px;color:#222">157.2 h</div><svg class="a" style="left:43.5px;top:346.5px" width="5" height="8" viewBox="0 0 5 8"><path d="M0.3 0.3 V7.6 L4.6 3.95Z" fill="#a8a8a8"/></svg><svg class="a" style="left:63px;top:342.5px" width="20" height="20" viewBox="0 0 20 20"><defs><clipPath id="cjo"><circle cx="10" cy="10" r="10"/></clipPath></defs><g clip-path="url(#cjo)"><rect width="20" height="20" fill="#cfd5cc"/><path d="M0 6 L4 5 L4 14 L0 15Z" fill="#e8e2d8"/><path d="M15 2 L20 2 L20 14 L16 16Z" fill="#8e9a8a"/><path d="M1 20 Q2 13.5 10 13 Q18 13.5 19 20Z" fill="#8db2dc"/><ellipse cx="10" cy="8.8" rx="4" ry="4.8" fill="#cf967c"/><path d="M5.8 7.6 Q5.6 2.6 10 2.5 Q14.6 2.6 14.2 7.6 Q12.6 4.8 10 5 Q7.4 4.8 5.8 7.6Z" fill="#3a2a22"/></g></svg><div class="t" style="left:90px;top:343.5px;font-size:8.8px;color:#2c70b0">Jordan O&#39;brain</div><div class="t" style="left:90px;top:355.5px;font-size:7.5px;color:#333">Network Engineer</div><div class="t" style="left:215px;top:342.8px;width:36px;text-align:right;font-size:8.1px;color:#1a1a1a;-webkit-text-stroke:.45px #1a1a1a">$ 200.00</div><div class="t" style="left:312px;top:342.5px;width:50px;text-align:center;font-size:8.1px;color:#222">124 h</div><div class="t" style="left:312px;top:360px;width:50px;text-align:center;font-size:8.1px;color:#222">396 h</div><svg class="a" style="left:43.5px;top:447.5px" width="5" height="8" viewBox="0 0 5 8"><path d="M0.3 0.3 V7.6 L4.6 3.95Z" fill="#a8a8a8"/></svg><svg class="a" style="left:63px;top:443.5px" width="20" height="20" viewBox="0 0 20 20"><defs><clipPath id="cjm"><circle cx="10" cy="10" r="10"/></clipPath></defs><g clip-path="url(#cjm)"><rect width="20" height="20" fill="#ffffff"/><path d="M5.2 12 Q4.6 4 6.8 2.2 Q10 0.4 13.2 2.2 Q15.4 4 14.8 12Z" fill="#5e3226"/><path d="M-1 20 L0 14 Q2 10.5 10 10.5 Q18 10.5 20 14 L21 20Z" fill="#1b1c2a"/><path d="M8.3 10.6 L10 19.5 L11.7 10.6Z" fill="#ececec"/><ellipse cx="10" cy="6.8" rx="3" ry="3.9" fill="#ecc9b8"/></g></svg><div class="t" style="left:90px;top:444.5px;font-size:8.8px;color:#2c70b0">Jessica Martin</div><div class="t" style="left:90px;top:456.5px;font-size:7.5px;color:#333">Network Operations Manager</div><div class="t" style="left:215px;top:443.8px;width:36px;text-align:right;font-size:8.1px;color:#1a1a1a;-webkit-text-stroke:.45px #1a1a1a">$ 170.00</div><div class="t" style="left:312px;top:443.5px;width:50px;text-align:center;font-size:8.1px;color:#222">212 h</div><div class="t" style="left:312px;top:461px;width:50px;text-align:center;font-size:8.1px;color:#222">316 h</div><svg class="a" style="left:172.5px;top:260px" width="13" height="12" viewBox="0 0 13 12"><path d="M6.5 0.5 L12.6 11.3 H0.4Z" fill="#e8705a"/><rect x="5.9" y="3.8" width="1.2" height="4.2" fill="#fff"/><rect x="5.9" y="8.9" width="1.2" height="1.2" fill="#fff"/></svg><div class="bar" style="left:369.5px;top:197px;width:162.2px;background-color:#5f7f5f"><svg class="a" style="left:0;top:0" width="162.2" height="13"><rect width="100%" height="13" fill="url(#chev)"/></svg><div class="pill">8 hr/day allocated</div></div><div class="bar" style="left:531.7px;top:197px;width:243.3px;background-color:#d68bbb"><svg class="a" style="left:0;top:0" width="243.3" height="13"><rect width="100%" height="13" fill="url(#chev)"/></svg><div class="pill">1.6 hr/day allocated</div></div><div class="bar" style="left:775.0px;top:197px;width:162.2px;background-color:#7f9fd3"><svg class="a" style="left:0;top:0" width="162.2" height="13"><rect width="100%" height="13" fill="url(#chev)"/></svg><div class="pill">0 hr/day allocated</div></div><div class="bar" style="left:937.2px;top:197px;width:74.8px;background-color:#d68bbb"><svg class="a" style="left:0;top:0" width="74.8" height="13"><rect width="100%" height="13" fill="url(#chev)"/></svg><div class="pill">1.6 hr/day allocated</div></div><div class="bar" style="left:369.5px;top:214px;width:162.2px;background-color:#d7eaf6"><svg class="a" style="left:0;top:0" width="162.2" height="13"><rect width="100%" height="13" fill="url(#chev)"/></svg><div class="pill">0 hr/day free</div></div><div class="bar" style="left:531.7px;top:214px;width:243.3px;background-color:#95cbe7"><svg class="a" style="left:0;top:0" width="243.3" height="13"><rect width="100%" height="13" fill="url(#chev)"/></svg><div class="pill">6.4 hr/day free</div></div><div class="bar" style="left:775.0px;top:214px;width:162.2px;background-color:#5083ae"><svg class="a" style="left:0;top:0" width="162.2" height="13"><rect width="100%" height="13" fill="url(#chev)"/></svg><div class="pill">8 hr/day free</div></div><div class="bar" style="left:937.2px;top:214px;width:74.8px;background-color:#95cbe7"><svg class="a" style="left:0;top:0" width="74.8" height="13"><rect width="100%" height="13" fill="url(#chev)"/></svg><div class="pill">6.4 hr/day free</div></div><div class="proj" style="left:370.0px;top:231px;width:161.2px;background:#c2699b;border-radius:4px"><div class="pt">01. Fiber Optic Network Exp...</div></div><div class="ic" style="left:476.3px;top:233px"></div><div class="ic" style="left:489.9px;top:233px"></div><div class="ic" style="left:503.5px;top:233px"></div><svg class="a" style="left:476.3px;top:233px" width="40" height="12" viewBox="0 0 40 12"><path d="M5.6 2 L6.55 4.45 L9.1 4.55 L7.1 6.2 L7.8 8.8 L5.6 7.35 L3.4 8.8 L4.1 6.2 L2.1 4.55 L4.65 4.45Z" fill="#4a7080"/><rect x="16.1" y="2.6" width="6.2" height="6" rx=".5" fill="#c2699b"/><path d="M32.8 2.3 L36.2 8.2 H29.4Z" fill="#e8203a"/></svg><div class="proj" style="left:532.2px;top:231px;width:120.3px;background:#2b5c7e;border-radius:4px"><div class="pt">Cloud Migration</div></div><div class="ic" style="left:592.6px;top:233px"></div><div class="ic" style="left:606.2px;top:233px"></div><div class="ic" style="left:619.8px;top:233px"></div><svg class="a" style="left:592.6px;top:233px" width="40" height="12" viewBox="0 0 40 12"><path d="M5.6 2 L6.55 4.45 L9.1 4.55 L7.1 6.2 L7.8 8.8 L5.6 7.35 L3.4 8.8 L4.1 6.2 L2.1 4.55 L4.65 4.45Z" fill="#2a8a8a"/><rect x="16.1" y="2.6" width="6.2" height="6" rx=".5" fill="#6a5a9a"/><path d="M32.8 2.3 L36.2 8.2 H29.4Z" fill="#e8203a"/></svg><div class="proj" style="left:653.8px;top:231px;width:120.2px;background:#c2699b;border-radius:4px"><div class="pt">01. Fiber Optic ...</div></div><div class="ic" style="left:719.2px;top:233px"></div><div class="ic" style="left:732.8px;top:233px"></div><div class="ic" style="left:746.4px;top:233px"></div><svg class="a" style="left:719.2px;top:233px" width="40" height="12" viewBox="0 0 40 12"><path d="M5.6 2 L6.55 4.45 L9.1 4.55 L7.1 6.2 L7.8 8.8 L5.6 7.35 L3.4 8.8 L4.1 6.2 L2.1 4.55 L4.65 4.45Z" fill="#5aa0d8"/><rect x="16.1" y="2.6" width="6.2" height="6" rx=".5" fill="#4a5a8a"/><path d="M32.8 2.3 L36.2 8.2 H29.4Z" fill="#e8203a"/></svg><div class="proj" style="left:937.7px;top:231px;width:74.3px;background:#4a8299;border-radius:4px 0 0 4px"><div class="pt">02. Small Cell Deployment</div></div><div class="bar" style="left:369.5px;top:258px;width:40.6px;background-color:#7f9fd3"><svg class="a" style="left:0;top:0" width="40.6" height="13"><rect width="100%" height="13" fill="url(#chev)"/></svg><div class="pill">0 hr/day allocated</div></div><div class="bar" style="left:410.1px;top:258px;width:121.7px;background-color:#d68bbb"><svg class="a" style="left:0;top:0" width="121.7" height="13"><rect width="100%" height="13" fill="url(#chev)"/></svg><div class="pill">1.6 hr/day allocated</div></div><div class="bar" style="left:531.7px;top:258px;width:480.3px;background-color:#5f7f5f"><svg class="a" style="left:0;top:0" width="480.3" height="13"><rect width="100%" height="13" fill="url(#chev)"/></svg><div class="pill">8 hr/day allocated</div></div><div class="bar" style="left:369.5px;top:275px;width:40.6px;background-color:#5083ae"><svg class="a" style="left:0;top:0" width="40.6" height="13"><rect width="100%" height="13" fill="url(#chev)"/></svg><div class="pill">8 hr/day free</div></div><div class="bar" style="left:410.1px;top:275px;width:121.7px;background-color:#95cbe7"><svg class="a" style="left:0;top:0" width="121.7" height="13"><rect width="100%" height="13" fill="url(#chev)"/></svg><div class="pill">6.4 hr/day free</div></div><div class="bar" style="left:531.7px;top:275px;width:480.3px;background-color:#d7eaf6"><svg class="a" style="left:0;top:0" width="480.3" height="13"><rect width="100%" height="13" fill="url(#chev)"/></svg><div class="pill">0 hr/day free</div></div><div class="proj" style="left:410.6px;top:291.5px;width:120.7px;background:#77579d;border-radius:4px"><div class="pt">PSA Training</div></div><div class="ic" style="left:459.5px;top:293.5px"></div><div class="ic" style="left:473.1px;top:293.5px"></div><div class="ic" style="left:486.7px;top:293.5px"></div><svg class="a" style="left:459.5px;top:293.5px" width="40" height="12" viewBox="0 0 40 12"><path d="M5.6 2 L6.55 4.45 L9.1 4.55 L7.1 6.2 L7.8 8.8 L5.6 7.35 L3.4 8.8 L4.1 6.2 L2.1 4.55 L4.65 4.45Z" fill="#5aa0a0"/><rect x="16.1" y="2.6" width="6.2" height="6" rx=".5" fill="#4a4a8a"/><path d="M32.8 2.3 L36.2 8.2 H29.4Z" fill="#e8203a"/></svg><div class="proj" style="left:532.2px;top:291.5px;width:201.2px;background:#1d7521;border-radius:4px"><div class="pt">Brand Positioning Audit</div></div><div class="ic" style="left:617.5px;top:293.5px"></div><div class="ic" style="left:631.1px;top:293.5px"></div><div class="ic" style="left:644.7px;top:293.5px"></div><svg class="a" style="left:617.5px;top:293.5px" width="40" height="12" viewBox="0 0 40 12"><path d="M5.6 2 L6.55 4.45 L9.1 4.55 L7.1 6.2 L7.8 8.8 L5.6 7.35 L3.4 8.8 L4.1 6.2 L2.1 4.55 L4.65 4.45Z" fill="#6aa0b0"/><rect x="16.1" y="2.6" width="6.2" height="6" rx=".5" fill="#4a4a8a"/><path d="M32.8 2.3 L36.2 8.2 H29.4Z" fill="#e8203a"/></svg><div class="proj" style="left:735.0px;top:291.5px;width:120.2px;background:#1d7521;border-radius:4px"><div class="pt">Brand Positionin...</div></div><div class="ic" style="left:800.3px;top:293.5px"></div><div class="ic" style="left:813.9px;top:293.5px"></div><div class="ic" style="left:827.5px;top:293.5px"></div><svg class="a" style="left:800.3px;top:293.5px" width="40" height="12" viewBox="0 0 40 12"><path d="M5.6 2 L6.55 4.45 L9.1 4.55 L7.1 6.2 L7.8 8.8 L5.6 7.35 L3.4 8.8 L4.1 6.2 L2.1 4.55 L4.65 4.45Z" fill="#2a6a9a"/><rect x="16.1" y="2.6" width="6.2" height="6" rx=".5" fill="#f08a20"/><path d="M32.8 2.3 L36.2 8.2 H29.4Z" fill="#e8203a"/></svg><div class="proj" style="left:856.8px;top:291.5px;width:155.2px;background:#4a8299;border-radius:4px 0 0 4px"><div class="pt">02. Small Cell Deployment</div></div><div class="ic" style="left:950.5px;top:293.5px"></div><div class="ic" style="left:964.1px;top:293.5px"></div><div class="ic" style="left:977.7px;top:293.5px"></div><svg class="a" style="left:950.5px;top:293.5px" width="40" height="12" viewBox="0 0 40 12"><path d="M5.6 2 L6.55 4.45 L9.1 4.55 L7.1 6.2 L7.8 8.8 L5.6 7.35 L3.4 8.8 L4.1 6.2 L2.1 4.55 L4.65 4.45Z" fill="#555"/><rect x="16.1" y="2.6" width="6.2" height="6" rx=".5" fill="#f08a20"/><path d="M32.8 2.3 L36.2 8.2 H29.4Z" fill="#e8203a"/></svg><div class="bar" style="left:369.5px;top:340px;width:567.7px;background-color:#8da38d"><svg class="a" style="left:0;top:0" width="567.7" height="13"><rect width="100%" height="13" fill="url(#chev)"/></svg><div class="pill">6 hr/day allocated</div></div><div class="bar" style="left:937.2px;top:340px;width:74.8px;background-color:#7f9fd3"><svg class="a" style="left:0;top:0" width="74.8" height="13"><rect width="100%" height="13" fill="url(#chev)"/></svg><div class="pill">0 hr/day allocated</div></div><div class="bar" style="left:369.5px;top:357px;width:567.7px;background-color:#bddcf0"><svg class="a" style="left:0;top:0" width="567.7" height="13"><rect width="100%" height="13" fill="url(#chev)"/></svg><div class="pill">2 hr/day free</div></div><div class="bar" style="left:937.2px;top:357px;width:74.8px;background-color:#5083ae"><svg class="a" style="left:0;top:0" width="74.8" height="13"><rect width="100%" height="13" fill="url(#chev)"/></svg><div class="pill">8 hr/day free</div></div><div class="proj" style="left:370.0px;top:373.5px;width:566.2px;background:#4a8299;border-radius:4px"><div class="pt">02. Small Cell Deployment</div></div><div class="ic" style="left:463.8px;top:374.6px"></div><div class="ic" style="left:477.4px;top:374.6px"></div><div class="ic" style="left:491.0px;top:374.6px"></div><svg class="a" style="left:463.8px;top:374.6px" width="40" height="12" viewBox="0 0 40 12"><path d="M5.6 2 L6.55 4.45 L9.1 4.55 L7.1 6.2 L7.8 8.8 L5.6 7.35 L3.4 8.8 L4.1 6.2 L2.1 4.55 L4.65 4.45Z" fill="#5aa0d8"/><rect x="16.1" y="2.6" width="6.2" height="6" rx=".5" fill="#f08a20"/><path d="M32.8 2.3 L36.2 8.2 H29.4Z" fill="#e8203a"/></svg><div class="bar" style="left:369.5px;top:441px;width:567.7px;background-color:#5f7f5f"><svg class="a" style="left:0;top:0" width="567.7" height="13"><rect width="100%" height="13" fill="url(#chev)"/></svg><div class="pill">8 hr/day allocated</div></div><div class="bar" style="left:937.2px;top:441px;width:74.8px;background-color:#7f9fd3"><svg class="a" style="left:0;top:0" width="74.8" height="13"><rect width="100%" height="13" fill="url(#chev)"/></svg><div class="pill">0 hr/day allocated</div></div><div class="bar" style="left:369.5px;top:458px;width:567.7px;background-color:#d7eaf6"><svg class="a" style="left:0;top:0" width="567.7" height="13"><rect width="100%" height="13" fill="url(#chev)"/></svg><div class="pill">0 hr/day free</div></div><div class="bar" style="left:937.2px;top:458px;width:74.8px;background-color:#5083ae"><svg class="a" style="left:0;top:0" width="74.8" height="13"><rect width="100%" height="13" fill="url(#chev)"/></svg><div class="pill">8 hr/day free</div></div><div class="a" style="left:369px;top:470px;width:643px;height:14px;overflow:hidden"><div class="proj" style="left:0.5px;top:5px;width:323px;background:#2b5c7e"><div class="pt" style="top:6px">Cloud Migration</div></div><div class="proj" style="left:325px;top:5px;width:242px;background:#4a8299"><div class="pt" style="top:6px">02. Small Cell Deployment</div></div><div class="ic" style="left:61.5px;top:7px"></div><div class="ic" style="left:75.1px;top:7px"></div><div class="ic" style="left:88.7px;top:7px"></div><svg class="a" style="left:61.5px;top:7px" width="40" height="12" viewBox="0 0 40 12"><path d="M5.6 2 L6.55 4.45 L9.1 4.55 L7.1 6.2 L7.8 8.8 L5.6 7.35 L3.4 8.8 L4.1 6.2 L2.1 4.55 L4.65 4.45Z" fill="#5aa0a0"/><rect x="16.1" y="2.6" width="6.2" height="6" rx=".5" fill="#4a4a8a"/><path d="M32.8 2.3 L36.2 8.2 H29.4Z" fill="#e8203a"/></svg><div class="ic" style="left:421.0px;top:7px"></div><div class="ic" style="left:434.6px;top:7px"></div><div class="ic" style="left:448.2px;top:7px"></div><svg class="a" style="left:421px;top:7px" width="40" height="12" viewBox="0 0 40 12"><path d="M5.6 2 L6.55 4.45 L9.1 4.55 L7.1 6.2 L7.8 8.8 L5.6 7.35 L3.4 8.8 L4.1 6.2 L2.1 4.55 L4.65 4.45Z" fill="#d04a4a"/><rect x="16.1" y="2.6" width="6.2" height="6" rx=".5" fill="#4a4a8a"/><path d="M32.8 2.3 L36.2 8.2 H29.4Z" fill="#e8203a"/></svg></div><div class="a" style="left:29px;top:488px;width:984px;height:1px;background:#d0d0d0"></div><div class="a" style="left:29.5px;top:484.3px;width:314px;height:4.5px;border-radius:2px;background:#a9a9a9"></div><div class="a" style="left:369.8px;top:484.3px;width:153px;height:4.5px;border-radius:2px;background:#a9a9a9"></div><div class="a" style="left:1012px;top:153px;width:1px;height:336px;background:#ececec"></div><div class="a" style="left:1022px;top:100px;width:1px;height:395px;background:#f3f3f3"></div></body></html>
